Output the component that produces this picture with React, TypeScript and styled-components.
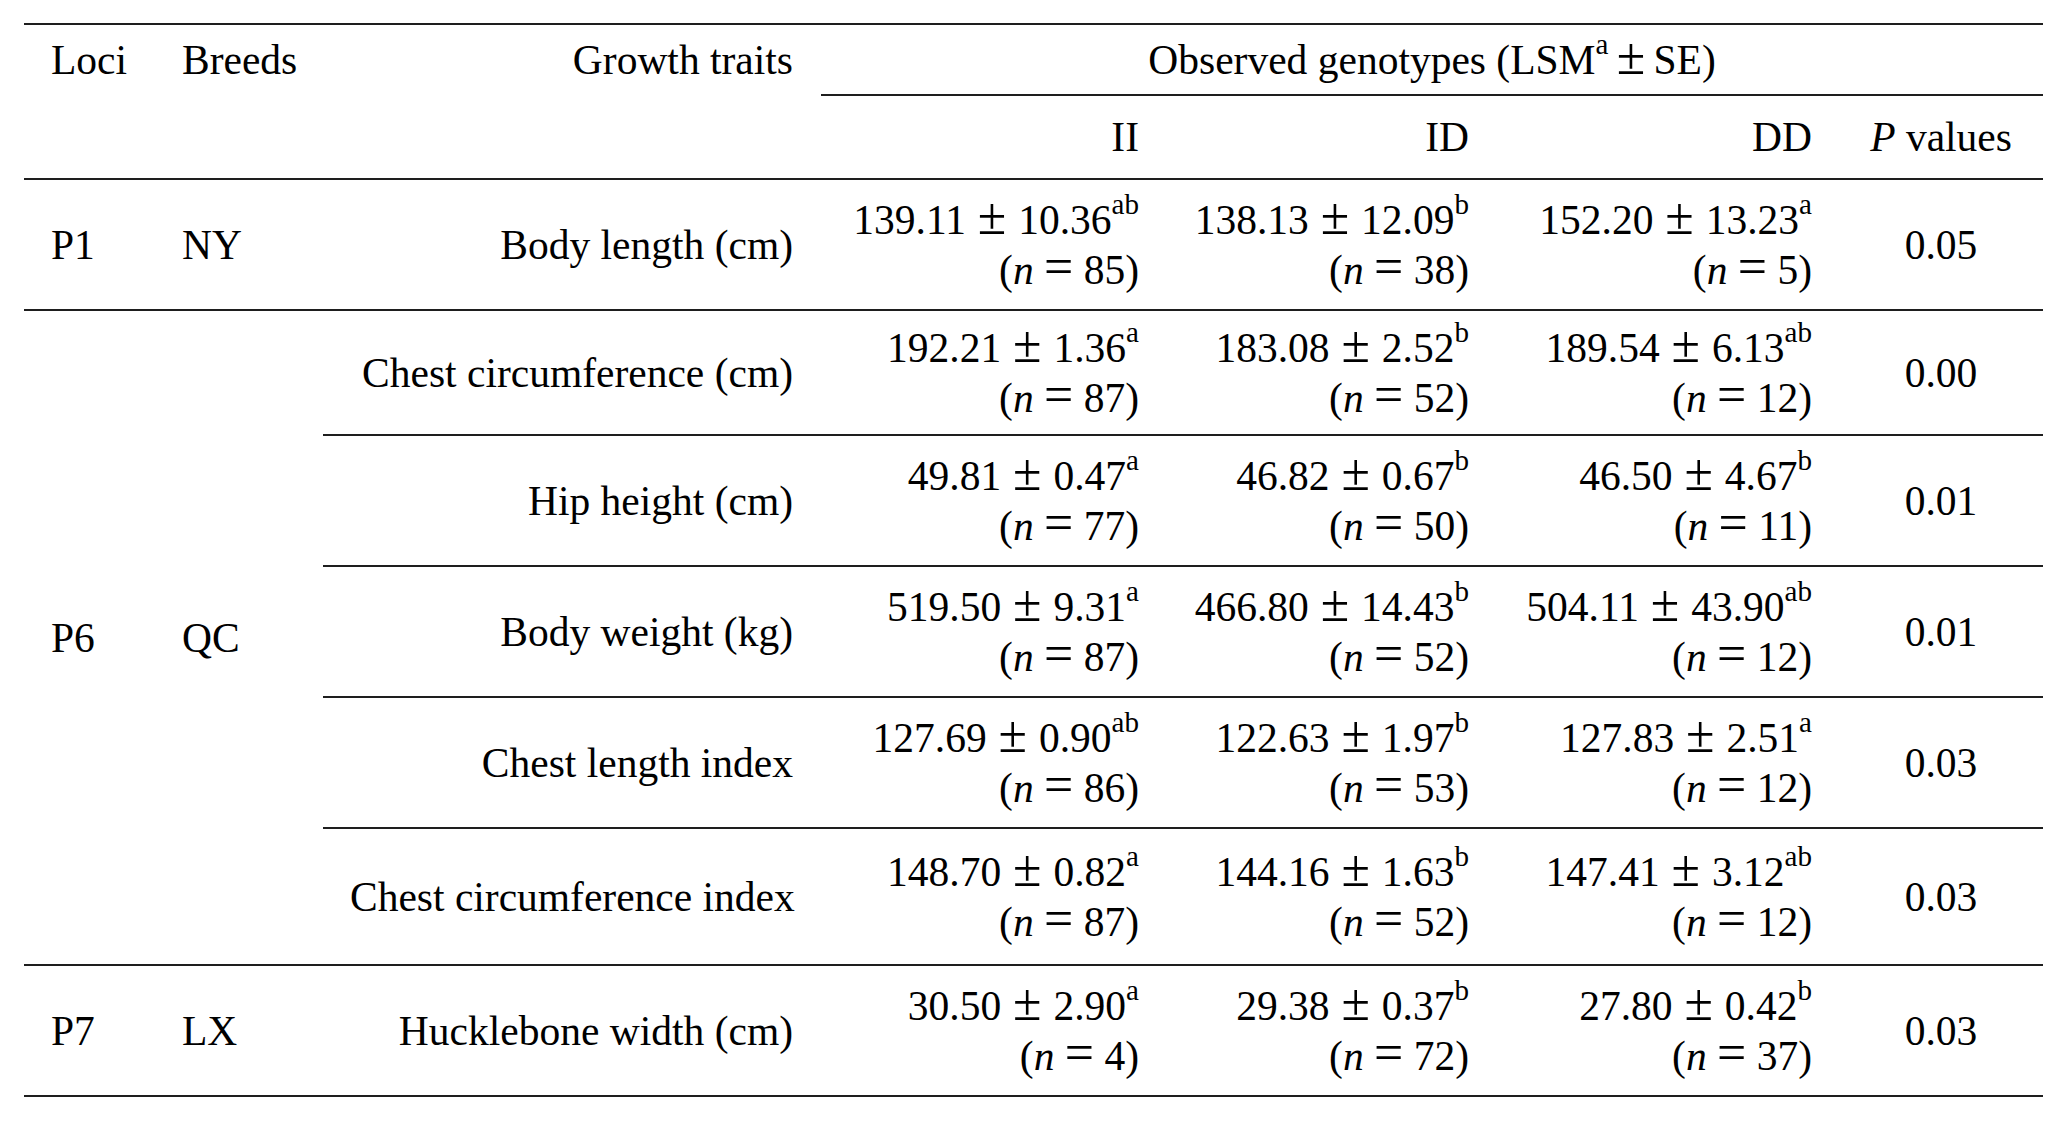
import React from 'react';
import styled, { createGlobalStyle } from 'styled-components';

const Global = createGlobalStyle`
  html, body { margin: 0; padding: 0; background: #ffffff; }
  body {
    font-family: "Liberation Serif", "Times New Roman", Times, serif;
    color: #000000;
  }
`;

const Page = styled.div`
  padding: 23px 24px 0 24px;
`;

const Table = styled.table`
  width: 2019px;
  table-layout: fixed;
  border-collapse: separate;
  border-spacing: 0;
  border-top: 2px solid #1e1e1e;
  font-size: 41.5px;
  line-height: 50px;
`;

type Align = 'left' | 'right' | 'center';

const HeadCell = styled.th<{ $align: Align; $ruled?: boolean; $row: 1 | 2; $trait?: boolean }>`
  font-weight: normal;
  text-align: ${(p) => p.$align};
  vertical-align: middle;
  white-space: nowrap;
  padding: ${(p) => (p.$row === 1 ? '9.5px' : '16px')} 27px;
  padding-right: ${(p) => (p.$trait ? '28px' : '27px')};
  border-bottom: 2px solid ${(p) => (p.$ruled ? '#1e1e1e' : 'transparent')};
`;

const BodyCell = styled.td<{ $align: Align; $ruled?: boolean; $trait?: boolean; $padY?: number }>`
  text-align: ${(p) => p.$align};
  vertical-align: middle;
  white-space: nowrap;
  padding: ${(p) => (p.$padY ?? 14.5)}px 27px;
  padding-right: ${(p) => (p.$trait ? '28px' : '27px')};
  border-bottom: 2px solid ${(p) => (p.$ruled ? '#1e1e1e' : 'transparent')};
`;

const Line = styled.span`
  display: block;
`;

const Sup = styled.span`
  font-size: 0.7em;
  vertical-align: 20px;
  line-height: 0;
`;

const Ital = styled.span`
  font-style: italic;
`;

const Op = styled.span<{ $gap: number }>`
  font-size: 1.25em;
  line-height: 0;
  margin: 0 ${(p) => p.$gap}em;
`;

type Val = { m: string; se: string; sup: string; n: number };
type Row = { trait: string; vals: [Val, Val, Val]; p: string; padY?: number };
type Group = { locus: string; breed: string; rows: Row[] };

const v = (m: string, se: string, sup: string, n: number): Val => ({ m, se, sup, n });

const groups: Group[] = [
  {
    locus: 'P1',
    breed: 'NY',
    rows: [
      {
        trait: 'Body length (cm)',
        vals: [v('139.11', '10.36', 'ab', 85), v('138.13', '12.09', 'b', 38), v('152.20', '13.23', 'a', 5)],
        p: '0.05',
      },
    ],
  },
  {
    locus: 'P6',
    breed: 'QC',
    rows: [
      {
        trait: 'Chest circumference (cm)',
        vals: [v('192.21', '1.36', 'a', 87), v('183.08', '2.52', 'b', 52), v('189.54', '6.13', 'ab', 12)],
        p: '0.00',
        padY: 11.5,
      },
      {
        trait: 'Hip height (cm)',
        vals: [v('49.81', '0.47', 'a', 77), v('46.82', '0.67', 'b', 50), v('46.50', '4.67', 'b', 11)],
        p: '0.01',
      },
      {
        trait: 'Body weight (kg)',
        vals: [v('519.50', '9.31', 'a', 87), v('466.80', '14.43', 'b', 52), v('504.11', '43.90', 'ab', 12)],
        p: '0.01',
      },
      {
        trait: 'Chest length index',
        vals: [v('127.69', '0.90', 'ab', 86), v('122.63', '1.97', 'b', 53), v('127.83', '2.51', 'a', 12)],
        p: '0.03',
      },
      {
        trait: 'Chest circumference index',
        vals: [v('148.70', '0.82', 'a', 87), v('144.16', '1.63', 'b', 52), v('147.41', '3.12', 'ab', 12)],
        p: '0.03',
        padY: 17.5,
      },
    ],
  },
  {
    locus: 'P7',
    breed: 'LX',
    rows: [
      {
        trait: 'Hucklebone width (cm)',
        vals: [v('30.50', '2.90', 'a', 4), v('29.38', '0.37', 'b', 72), v('27.80', '0.42', 'b', 37)],
        p: '0.03',
      },
    ],
  },
];

const ValueContent: React.FC<{ val: Val }> = ({ val }) => (
  <>
    <Line>
      {val.m}
      <Op $gap={0.23}>±</Op>
      {val.se}
      <Sup>{val.sup}</Sup>
    </Line>
    <Line>
      (<Ital>n</Ital>
      <Op $gap={0.2}>=</Op>
      {val.n})
    </Line>
  </>
);

export default function App() {
  return (
    <Page>
      <Global />
      <Table>
        <colgroup>
          <col style={{ width: 131 }} />
          <col style={{ width: 168 }} />
          <col style={{ width: 498 }} />
          <col style={{ width: 345 }} />
          <col style={{ width: 330 }} />
          <col style={{ width: 343 }} />
          <col style={{ width: 204 }} />
        </colgroup>
        <thead>
          <tr>
            <HeadCell $row={1} $align="left">Loci</HeadCell>
            <HeadCell $row={1} $align="left">Breeds</HeadCell>
            <HeadCell $row={1} $align="right" $trait>
              Growth traits
            </HeadCell>
            <HeadCell $row={1} $align="center" colSpan={4} $ruled>
              Observed genotypes (LSM<Sup>a</Sup>
              <Op $gap={0.16}>±</Op>SE)
            </HeadCell>
          </tr>
          <tr>
            <HeadCell $row={2} $align="left" $ruled />
            <HeadCell $row={2} $align="left" $ruled />
            <HeadCell $row={2} $align="right" $ruled $trait />
            <HeadCell $row={2} $align="right" $ruled>II</HeadCell>
            <HeadCell $row={2} $align="right" $ruled>ID</HeadCell>
            <HeadCell $row={2} $align="right" $ruled>DD</HeadCell>
            <HeadCell $row={2} $align="center" $ruled>
              <Ital>P</Ital> values
            </HeadCell>
          </tr>
        </thead>
        <tbody>
          {groups.map((g) =>
            g.rows.map((r, i) => (
              <tr key={g.locus + r.trait}>
                {i === 0 && (
                  <>
                    <BodyCell $align="left" rowSpan={g.rows.length} $ruled>
                      {g.locus}
                    </BodyCell>
                    <BodyCell $align="left" rowSpan={g.rows.length} $ruled>
                      {g.breed}
                    </BodyCell>
                  </>
                )}
                <BodyCell $align="right" $trait $ruled $padY={r.padY}>
                  {r.trait}
                </BodyCell>
                {r.vals.map((val, k) => (
                  <BodyCell key={k} $align="right" $ruled $padY={r.padY}>
                    <ValueContent val={val} />
                  </BodyCell>
                ))}
                <BodyCell $align="center" $ruled $padY={r.padY}>
                  {r.p}
                </BodyCell>
              </tr>
            ))
          )}
        </tbody>
      </Table>
    </Page>
  );
}
